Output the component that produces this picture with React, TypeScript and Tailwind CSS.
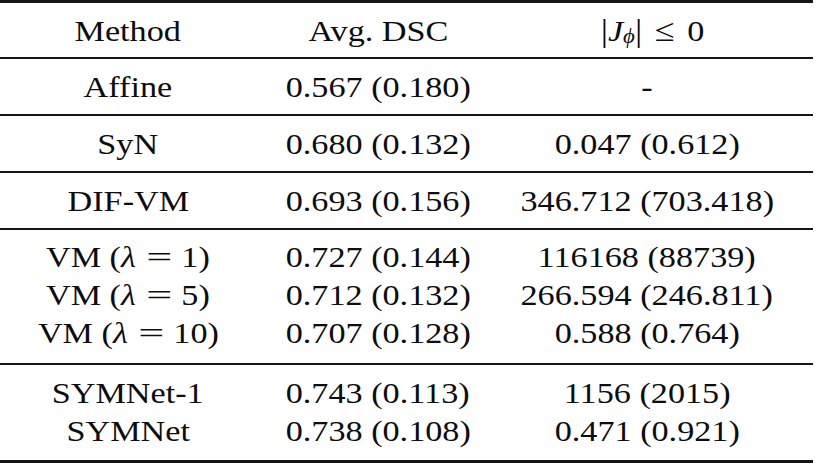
import React from 'react';

type Cell = React.ReactNode;

// one line of the table: three centred cells
const Row = ({ cells, header = false }: { cells: Cell[]; header?: boolean }) => (
  <div className="grid grid-cols-[256px_244px_294px] h-[38px] items-center">
    {cells.map((c, i) => (
      <div key={i} className={`flex justify-center ${header && i === 2 ? 'pl-[12px]' : ''}`}>
        <span className="inline-block whitespace-pre scale-x-[1.14]">{c}</span>
      </div>
    ))}
  </div>
);

const Rule = ({ thick = false }: { thick?: boolean }) => (
  <div className={`${thick ? 'h-[3px]' : 'h-[2px]'} bg-[#151515] w-full`} />
);

const Lam = ({ v }: { v: string }) => (
  <>
    VM (<i className="mr-[1px]">λ</i>
    <span className="px-[11px]">
      <span className="inline-block scale-x-[1.35]">=</span>
    </span>
    {v})
  </>
);

const Jac = () => (
  <>
    <span className="text-[32px]">|</span>
    <i>J</i>
    <sub className="text-[20px] italic relative top-[2px]">ϕ</sub>
    <span className="text-[32px]">|</span>
    <span className="mx-[11px] text-[32px]">≤</span>0
  </>
);

export default function App() {
  return (
    <div className="w-[818px] h-[463px] bg-white text-[#0d0d0d] text-[30px] leading-[38px] font-[family-name:Liberation_Serif,Times_New_Roman,serif]">
      <div className="w-[813px] flex flex-col">
        <Rule thick />
        {/* header */}
        <div className="h-[54px] flex flex-col justify-center">
          <Row header cells={['Method', 'Avg. DSC', <Jac key="j" />]} />
        </div>
        <Rule />
        <div className="h-[55px] flex flex-col justify-center">
          <Row cells={['Affine', '0.567 (0.180)', '-']} />
        </div>
        <Rule />
        <div className="h-[55px] flex flex-col justify-center">
          <Row cells={['SyN', '0.680 (0.132)', '0.047 (0.612)']} />
        </div>
        <Rule />
        <div className="h-[55px] flex flex-col justify-center">
          <Row cells={['DIF-VM', '0.693 (0.156)', '346.712 (703.418)']} />
        </div>
        <Rule />
        {/* VoxelMorph variants */}
        <div className="h-[133px] flex flex-col justify-center pb-[3px]">
          <Row cells={[<Lam key="a" v="1" />, '0.727 (0.144)', '116168 (88739)']} />
          <Row cells={[<Lam key="b" v="5" />, '0.712 (0.132)', '266.594 (246.811)']} />
          <Row cells={[<Lam key="c" v="10" />, '0.707 (0.128)', '0.588 (0.764)']} />
        </div>
        <Rule />
        <div className="h-[95px] flex flex-col justify-center pb-[2px]">
          <Row cells={['SYMNet-1', '0.743 (0.113)', '1156 (2015)']} />
          <Row cells={['SYMNet', '0.738 (0.108)', '0.471 (0.921)']} />
        </div>
        <Rule thick />
      </div>
    </div>
  );
}
